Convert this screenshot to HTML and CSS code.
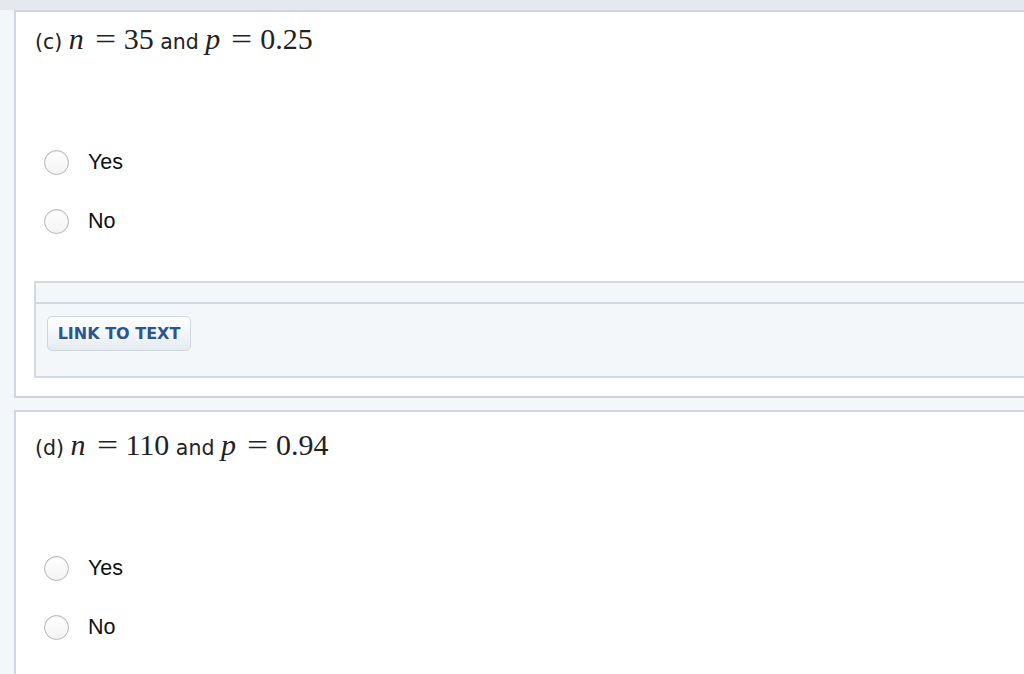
FILE: index.html
```html
<!DOCTYPE html>
<html lang="en">
<head>
	<meta charset="UTF-8">
	<title>Binomial approximation</title>
	<link rel="stylesheet" href="styles.css">
</head>
<body>
	<div class="topbar"></div>
	<div class="page">
		<div class="card">
			<p class="question">(c) <span class="math"><i>n</i><span class="eq">=</span>35</span> and <span class="math"><i>p</i><span class="eq">=</span>0.25</span></p>
			<div class="choices">
				<label class="choice"><input type="radio" name="qc"><span>Yes</span></label>
				<label class="choice"><input type="radio" name="qc"><span>No</span></label>
			</div>
			<div class="panel">
				<div class="panel-head"></div>
				<div class="panel-body">
					<button class="link-btn">LINK TO TEXT</button>
				</div>
			</div>
		</div>

		<div class="card card-d">
			<p class="question">(d) <span class="math"><i>n</i><span class="eq">=</span>110</span> and <span class="math"><i>p</i><span class="eq">=</span>0.94</span></p>
			<div class="choices">
				<label class="choice"><input type="radio" name="qd"><span>Yes</span></label>
				<label class="choice"><input type="radio" name="qd"><span>No</span></label>
			</div>
		</div>
	</div>
</body>
</html>
```

FILE: styles.css
```css
* {
	box-sizing: border-box;
	padding: 0;
	margin: 0;
}

body {
	font-family: 'DejaVu Sans', Verdana, sans-serif;
	background: #f4f7fa;
	color: #222;
	overflow: hidden;
}

.topbar {
	height: 10px;
	background: #e5e9ee;
}

.page {
	padding-left: 14px;
}

.card {
	background: #fff;
	border: 2px solid #cfd6df;
	border-right: none;
	padding: 0 0 18px 18px;
	margin-bottom: 12px;
}

.question {
	font-size: 20.5px;
	line-height: 34px;
	padding-top: 10px;
	padding-left: 1px;
	height: 44px;
}

.math {
	font-family: 'Liberation Serif', 'Times New Roman', serif;
	font-size: 30px;
}

.math i {
	font-family: 'Liberation Serif', serif;
	font-style: italic;
}

/* the relation sign is drawn wider, like a typeset equals */
.eq {
	display: inline-block;
	margin: 0 10px 0 13px;
	transform: scaleX(1.25);
}

.choices {
	display: flex;
	flex-direction: column;
	padding: 77px 0 0 10px;
}

.choice {
	display: flex;
	align-items: center;
	gap: 19px;
	height: 59px;
	font-family: 'Liberation Sans', Arial, sans-serif;
	font-size: 21.5px;
	color: #111;
}

.choice input {
	appearance: none;
	-webkit-appearance: none;
	width: 25px;
	height: 25px;
	border-radius: 50%;
	border: 1px solid #b5b5b5;
	background: linear-gradient(#ffffff, #f3f3f3);
	box-shadow: inset 0 1px 1px rgba(0, 0, 0, 0.08);
}

.panel {
	margin-top: 30px;
	border: 2px solid #d3d9e1;
	border-right: none;
	background: #f4f7fa;
}

.panel-head {
	height: 21px;
	border-bottom: 2px solid #d3d9e1;
}

.panel-body {
	padding: 12px 0 25px 11px;
}

.link-btn {
	font-family: 'DejaVu Sans', Verdana, sans-serif;
	font-weight: bold;
	font-size: 16px;
	color: #2b5591;
	height: 35px;
	width: 144px;
	border: 1px solid #cdd6e1;
	border-radius: 5px;
	background: linear-gradient(#ffffff, #e6ebf1);
}

.card-d .question {
	padding-top: 16px;
	height: 50px;
}

.card-d .choices {
	padding-top: 77px;
}
```
